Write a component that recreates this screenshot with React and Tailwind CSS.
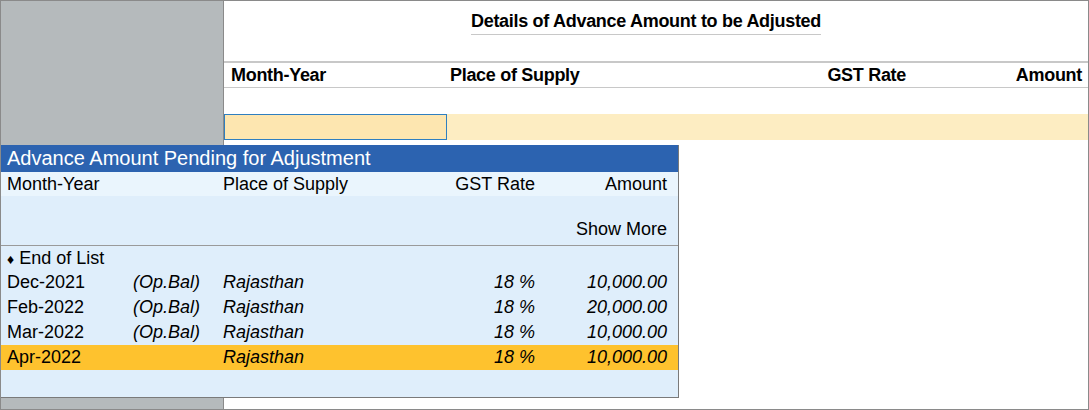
export default function App() {
  const rows = [
    ["Dec-2021", "(Op.Bal)", "Rajasthan", "18 %", "10,000.00", false],
    ["Feb-2022", "(Op.Bal)", "Rajasthan", "18 %", "20,000.00", false],
    ["Mar-2022", "(Op.Bal)", "Rajasthan", "18 %", "10,000.00", false],
    ["Apr-2022", "", "Rajasthan", "18 %", "10,000.00", true],
  ];
  return (
    <div className="relative w-[1089px] h-[410px] border border-[#8a8a8a] flex bg-white text-black overflow-hidden" style={{ fontFamily: '"Liberation Sans", Arial, sans-serif' }}>
      <div className="w-[223px] shrink-0 bg-[#b5babc] border-r border-[#8a8a8a]" />
      <div className="flex-1 flex flex-col">
        <div className="h-[60px] flex justify-center pt-[8px]">
          <div className="h-[26px] border-b border-[#c8c8c8] text-[18px] font-bold tracking-[-0.3px] leading-[24px] mr-[20px]">Details of Advance Amount to be Adjusted</div>
        </div>
        <div className="h-[27px] border-t-2 border-b border-[#c8c8c8] flex items-center text-[18px] font-bold tracking-[-0.3px] pr-[6px]">
          <div className="w-[226px] pl-[7px]">Month-Year</div>
          <div className="flex-1">Place of Supply</div>
          <div className="w-[180px] text-right pr-[76px]">GST Rate</div>
          <div className="w-[100px] text-right">Amount</div>
        </div>
        <div className="h-[26px]" />
        <div className="h-[26px] flex bg-[#fdedc2]">
          <div className="w-[223px] bg-[#fde6b0] border border-[#2f7fc0]" />
        </div>
      </div>
      <div className="absolute left-0 top-[144px] w-[678px] h-[253px] bg-[#dfeefb] border-b border-r border-[#7a7a7a] text-[18px] flex flex-col">
        <div className="h-[27px] bg-[#2c63b0] text-white text-[20px] leading-[27px] pl-[6px]">Advance Amount Pending for Adjustment</div>
        <div className="h-[24px] bg-[#eaf5fd] flex items-center pr-[11px]">
          <div className="w-[222px] pl-[6px]">Month-Year</div>
          <div className="flex-1">Place of Supply</div>
          <div className="w-[130px] text-right">GST Rate</div>
          <div className="w-[132px] text-right">Amount</div>
        </div>
        <div className="h-[50px] flex items-end justify-end pr-[11px] pb-[2px] border-b border-[#9a9a9a]">Show More</div>
        <div className="h-[24px] leading-[24px] pl-[6px]"><span className="text-[14px]">♦</span> End of List</div>
        {rows.map(([m, op, p, r, a, hl]) => (
          <div key={m} className={`h-[25px] flex items-center pr-[11px] ${hl ? "bg-[#fec22e]" : ""}`}>
            <div className="w-[132px] pl-[6px]">{m}</div>
            <div className="w-[90px] italic">{op}</div>
            <div className="flex-1 italic">{p}</div>
            <div className="w-[130px] text-right italic">{r}</div>
            <div className="w-[132px] text-right italic">{a}</div>
          </div>
        ))}
      </div>
    </div>
  );
}
